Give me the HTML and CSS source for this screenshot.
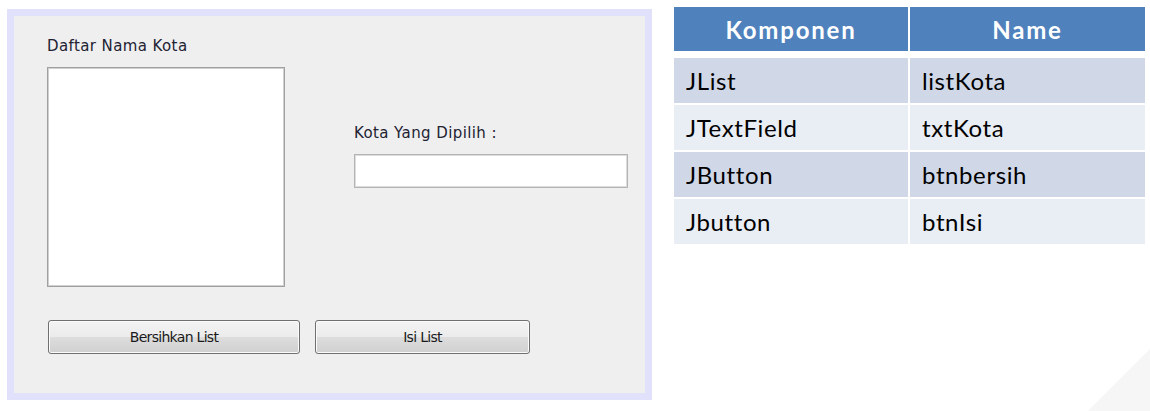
FILE: index.html
```html
<!DOCTYPE html>
<html>
<head>
<meta charset="utf-8">
<link rel="stylesheet" href="styles.css">
</head>
<body>
<div class="page">
  <div class="frame">
    <div class="form">
      <div class="top">
        <div class="col-left">
          <div class="label">Daftar Nama Kota</div>
          <div class="listbox"></div>
        </div>
        <div class="col-right">
          <div class="label">Kota Yang Dipilih :</div>
          <div class="textfield"></div>
        </div>
      </div>
      <div class="buttons">
        <div class="btn btn-clear">Bersihkan List</div>
        <div class="btn btn-fill">Isi List</div>
      </div>
    </div>
  </div>
  <div class="table">
    <div class="th">Komponen</div>
    <div class="th">Name</div>
    <div class="td odd">JList</div>
    <div class="td odd">listKota</div>
    <div class="td even">JTextField</div>
    <div class="td even">txtKota</div>
    <div class="td odd">JButton</div>
    <div class="td odd">btnbersih</div>
    <div class="td even">Jbutton</div>
    <div class="td even">btnIsi</div>
  </div>
</div>
<div class="corner"></div>
</body>
</html>
```
FILE: styles.css
```css
html, body {
  margin: 0;
  padding: 0;
  background: #ffffff;
}
body {
  width: 1150px;
  height: 411px;
  overflow: hidden;
  position: relative;
}
.page {
  display: flex;
  align-items: flex-start;
  padding: 7px 0 0 7px;
  gap: 22px;
}
.frame {
  margin-top: 2px;
  width: 645px;
  height: 391px;
  box-sizing: border-box;
  border: 7px solid #e1e1fb;
  background: #efefef;
}
.form {
  padding: 19px 0 0 33px;
  font-family: "DejaVu Sans", sans-serif;
  font-size: 13px;
  color: #222233;
}
.top {
  display: flex;
}
.label {
  font-size: 15px;
  line-height: 17px;
  height: 17px;
  padding-top: 3px;
  margin-bottom: 12px;
  letter-spacing: 0.4px;
}
.listbox {
  width: 238px;
  height: 220px;
  box-sizing: border-box;
  background: #ffffff;
  border: 1px solid #a0a0a0;
  box-shadow: inset 1px 1px 0 #d0d0d0, inset -1px -1px 0 #d0d0d0;
}
.col-right {
  margin-left: 69px;
  padding-top: 87px;
}
.textfield {
  width: 274px;
  height: 34px;
  box-sizing: border-box;
  background: #ffffff;
  border: 1px solid #b4b4b4;
  box-shadow: inset 1px 1px 0 #dcdcdc, inset -1px -1px 0 #dcdcdc;
}
.buttons {
  display: flex;
  gap: 15px;
  margin-top: 33px;
  margin-left: 1px;
}
.btn {
  height: 34px;
  box-sizing: border-box;
  border: 1px solid #707070;
  border-radius: 3px;
  box-shadow: inset 0 0 0 1px #fbfbfb;
  background: linear-gradient(#f3f3f3 0%, #ebebeb 50%, #dddddd 51%, #d0d0d0 100%);
  display: flex;
  align-items: center;
  justify-content: center;
  color: #1a1a1a;
  font-size: 14px;
  letter-spacing: -0.7px;
}
.btn-clear { width: 252px; }
.btn-fill { width: 215px; }
.table {
  display: grid;
  grid-template-columns: 234px 235px;
  column-gap: 2px;
  row-gap: 2px;
  font-family: Lato, "Open Sans", sans-serif;
  font-size: 24px;
}
.th {
  height: 44px;
  background: #4f81bd;
  color: #ffffff;
  font-weight: bold;
  letter-spacing: 1.8px;
  display: flex;
  align-items: center;
  justify-content: center;
  margin-bottom: 5px;
}
.td {
  height: 45px;
  display: flex;
  align-items: center;
  padding-left: 12px;
  color: #000000;
  letter-spacing: 0.6px;
}
.odd { background: #d0d8e8; }
.even { background: #e9edf4; }
.corner {
  position: absolute;
  right: 0;
  bottom: 0;
  width: 0;
  height: 0;
  border-left: 62px solid transparent;
  border-bottom: 62px solid #f6f6f6;
}
```
